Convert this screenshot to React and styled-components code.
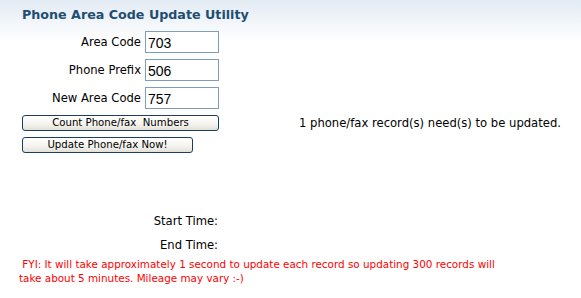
import React, { useState } from 'react'
import styled, { createGlobalStyle } from 'styled-components'

const GlobalStyle = createGlobalStyle`
    html, body { margin: 0; padding: 0; background: #fff; }
    body { font-family: "DejaVu Sans", Verdana, sans-serif; }
`

const Page = styled.div`
    width: 581px;
    height: 298px;
    box-sizing: border-box;
    padding-top: 6px;
    background: linear-gradient(to bottom, #e2eaf3 0px, #f6f9fc 28px, #ffffff 42px);
    color: #000;
    font-size: 11.6px;
`

const Title = styled.h1`
    margin: 0 0 7px 22px;
    height: 18px;
    line-height: 18px;
    font-size: 12.7px;
    font-weight: bold;
    color: #1e4e70;
`

const Field = styled.div`
    display: flex;
    align-items: center;
    height: 22px;
    margin-bottom: 6px;
`

const Label = styled.label`
    width: 141px;
    padding-right: 4px;
    text-align: right;
    white-space: nowrap;
`

const Input = styled.input`
    width: 74px;
    height: 22px;
    box-sizing: border-box;
    border: 1px solid #7f9db9;
    padding: 1px 2px 0;
    font-family: "Liberation Sans", Arial, sans-serif;
    font-size: 14px;
    color: #000;
    outline: none;
`

const ActionRow = styled.div`
    display: flex;
    align-items: center;
    height: 16px;
    margin-bottom: 6px;
    padding-left: 22px;
`

const Button = styled.button`
    width: ${p => p.width}px;
    height: 16px;
    box-sizing: border-box;
    padding: 0;
    border: 1px solid #1b3e66;
    border-radius: 3px;
    background: linear-gradient(to bottom, #ffffff 0%, #f4f3ee 60%, #e2e0d6 100%);
    font-family: "DejaVu Sans Condensed", "DejaVu Sans", Tahoma, sans-serif;
    font-stretch: condensed;
    font-size: 11.3px;
    line-height: 14px;
    color: #000;
    white-space: pre;
    cursor: pointer;
`

const Message = styled.span`
    margin-left: 80px;
    white-space: nowrap;
`

const Spacer = styled.div`
    height: ${p => p.size}px;
`

const TimeRow = styled.div`
    display: flex;
    height: 14px;
    line-height: 14px;
    margin-bottom: ${p => p.gap || 0}px;
`

const TimeLabel = styled.span`
    width: 218px;
    text-align: right;
`

const Note = styled.p`
    margin: 0 0 0 19px;
    width: 490px;
    font-size: 10.4px;
    line-height: 14px;
    color: #f00;
`

const App = () => {
    const [fields, setFields] = useState({ area: '703', prefix: '506', newArea: '757' })

    const update = key => e => setFields({ ...fields, [key]: e.target.value })

    return (
        <Page>
            <GlobalStyle />
            <Title>Phone Area Code Update Utility</Title>
            <Field>
                <Label>Area Code</Label>
                <Input value={fields.area} onChange={update('area')} />
            </Field>
            <Field>
                <Label>Phone Prefix</Label>
                <Input value={fields.prefix} onChange={update('prefix')} />
            </Field>
            <Field>
                <Label>New Area Code</Label>
                <Input value={fields.newArea} onChange={update('newArea')} />
            </Field>
            <ActionRow>
                <Button width={197}>{'Count Phone/fax  Numbers'}</Button>
                <Message>1 phone/fax record(s) need(s) to be updated.</Message>
            </ActionRow>
            <ActionRow>
                <Button width={171}>Update Phone/fax Now!</Button>
            </ActionRow>
            <Spacer size={55} />
            <TimeRow gap={10}>
                <TimeLabel>Start Time:</TimeLabel>
            </TimeRow>
            <TimeRow gap={5}>
                <TimeLabel>End Time:</TimeLabel>
            </TimeRow>
            <Note>&nbsp;FYI: It will take approximately 1 second to update each record so updating 300 records will take about 5 minutes. Mileage may vary :-)</Note>
        </Page>
    )
}

export default App
